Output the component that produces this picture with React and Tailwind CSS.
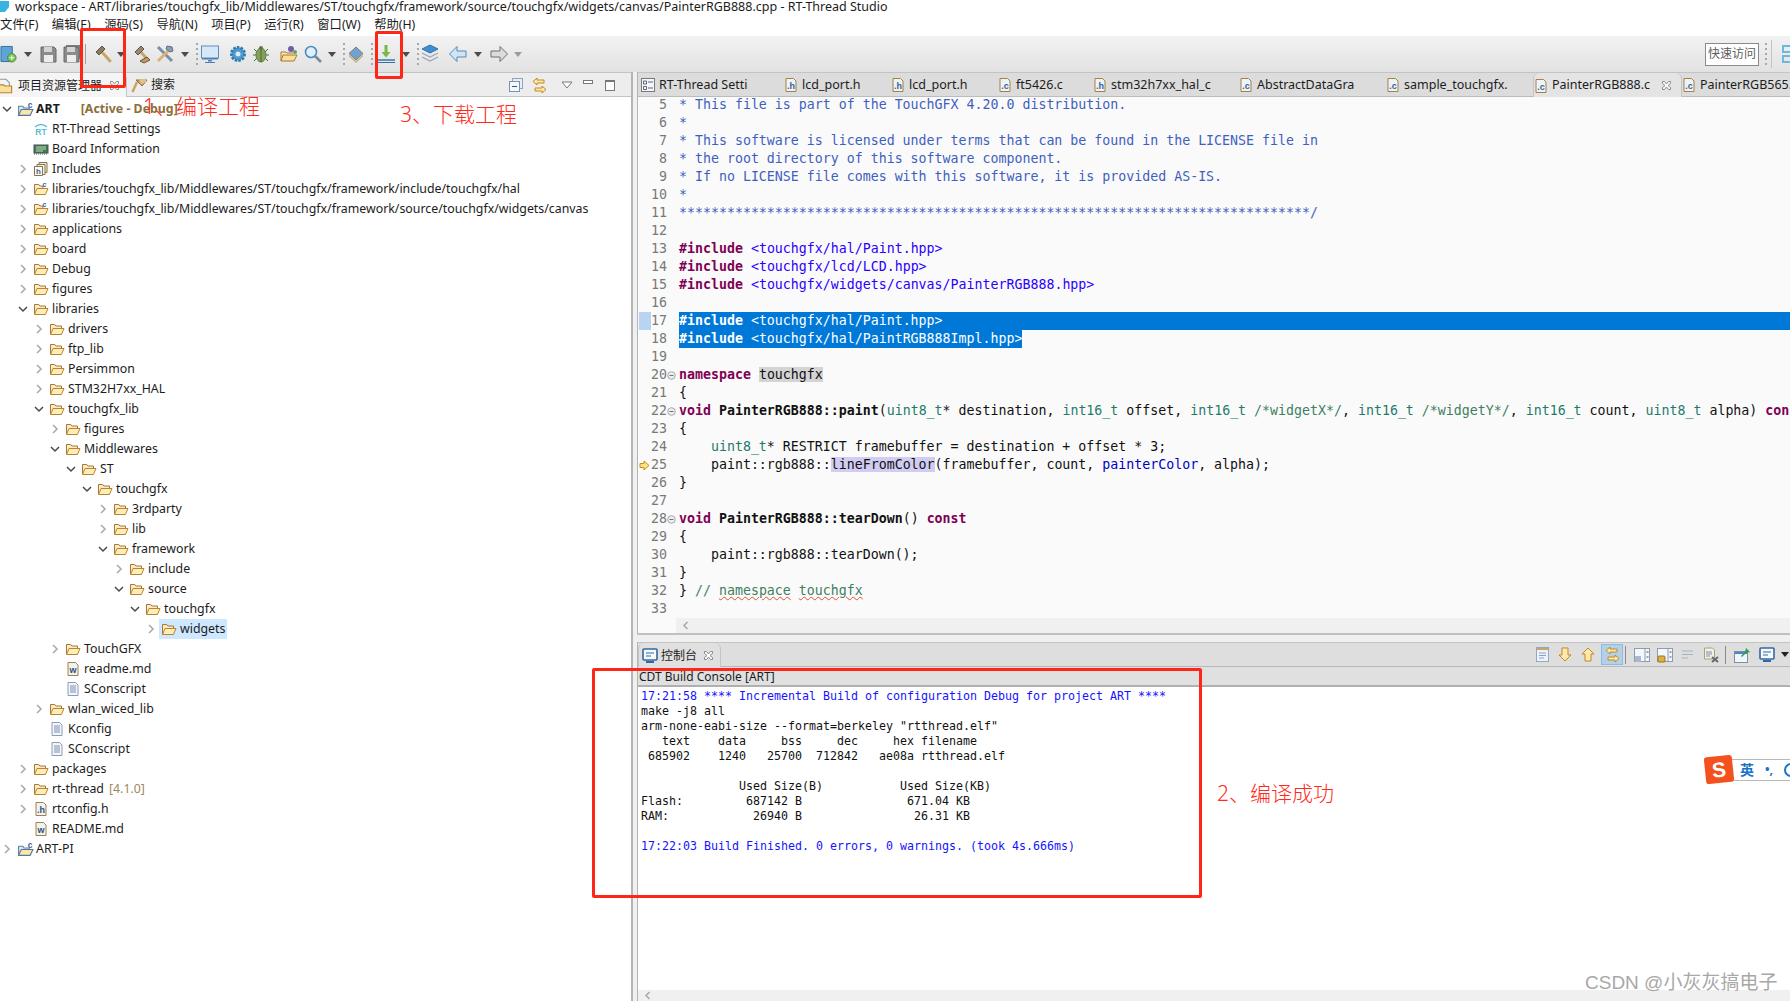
import React from 'react';

const Svg = ({ children, size = 16 }) => (
  <svg width={size} height={size} viewBox="0 0 16 16" fill="none" className="shrink-0">
    {children}
  </svg>
);

// tree + tab icons
const Folder = () => (
  <Svg>
    <path d="M1.5 13V3.5h4.2l1.2 1.5h5.6v2.4" fill="#fbeac4" stroke="#a9772b" />
    <path d="M1.5 13.5 4 7.5h11l-2.6 6z" fill="#fdeeb9" stroke="#b9832f" />
  </Svg>
);
const ProjectFolder = () => (
  <Svg size={17}>
    <path d="M1.5 13V5h4l1 1.5h5v1.5" fill="#dbe8f5" stroke="#5f7fa6" />
    <path d="M1.5 13.5 4 8h11l-2.6 5.5z" fill="#fbe6a8" stroke="#4f77a8" />
    <text x="10" y="6.5" fontSize="8" fontWeight="700" fill="#3a5f95" fontFamily="Liberation Sans">c</text>
  </Svg>
);
const SrcFolder = () => (
  <Svg>
    <path d="M1.5 13V3.5h4.2l1.2 1.5h3v2.4" fill="#fbeac4" stroke="#a9772b" />
    <path d="M1.5 13.5 4 7.5h11l-2.6 6z" fill="#fdeeb9" stroke="#b9832f" />
    <text x="9.5" y="6" fontSize="7" fontWeight="700" fill="#3a5f95" fontFamily="Liberation Sans">c</text>
  </Svg>
);
const FileLetter = ({ l, color = '#3a5f95', stroke = '#a5803f' }) => (
  <Svg>
    <path d="M3 1.5h7.5l2.5 2.5v10.5H3z" fill="#eef3f9" stroke={stroke} />
    <text x="8" y="12" textAnchor="middle" fontSize="9" fontWeight="700" fill={color} fontFamily="Liberation Sans">{l}</text>
  </Svg>
);
const TextFile = () => (
  <Svg>
    <path d="M3 1.5h7.5l2.5 2.5v10.5H3z" fill="#f2f5fa" stroke="#8c9cb5" />
    <path d="M5 5h6M5 7h6M5 9h6M5 11h6" stroke="#7e90ad" />
  </Svg>
);
const RtIcon = () => (
  <Svg>
    <path d="M2 6q6-5 12 0" stroke="#59c2d8" strokeWidth="1.4" />
    <text x="8" y="14" textAnchor="middle" fontSize="8.5" fontWeight="700" fill="#59bcd4" fontFamily="Liberation Sans">RT</text>
  </Svg>
);
const BoardIcon = () => (
  <Svg>
    <rect x="1" y="4" width="14" height="8" fill="#3c7d4c" stroke="#44505c" />
    <path d="M3 6h10M3 8h10M3 10h7" stroke="#c4d8b8" />
    <path d="M1 13h14" stroke="#555" strokeDasharray="1 1" />
  </Svg>
);
const IncludesIcon = () => (
  <Svg>
    <path d="M6 1.5h8v10H6z" fill="#e4e9f0" stroke="#8a7440" />
    <path d="M4 3.5h8v10H4z" fill="#eef2f6" stroke="#8a7440" />
    <path d="M1.5 5.5h8v9h-8z" fill="#f7f9fb" stroke="#8a7440" />
    <text x="5.5" y="13" textAnchor="middle" fontSize="8" fontWeight="700" fill="#3a5f95" fontFamily="Liberation Sans">h</text>
  </Svg>
);

const Chevron = ({ open }) => (
  <svg width="10" height="10" viewBox="0 0 10 10" fill="none" className="shrink-0">
    {open ? (
      <path d="M1 3l4 4 4-4" stroke="#4a4a4a" strokeWidth="1.5" />
    ) : (
      <path d="M3 1l4 4-4 4" stroke="#a8a8a8" strokeWidth="1.5" />
    )}
  </svg>
);

const Close = () => (
  <svg width="11" height="11" viewBox="0 0 11 11" className="shrink-0">
    <path d="M1.5 1.5h2L5.5 4l2-2.5h2v2L7 5.5l2.5 2v2h-2l-2-2.5-2 2.5h-2v-2L4 5.5l-2.5-2z" fill="#fff" stroke="#8a8a8a" strokeWidth="1" />
  </svg>
);

// toolbar icons
const Drop = ({ color = '#4c4c4c' }) => (
  <svg width="8" height="5" viewBox="0 0 8 5"><path d="M0 0h8L4 5z" fill={color} /></svg>
);
const DotSep = () => (
  <div className="flex flex-col gap-[3px]">
    <div className="w-[2px] h-[2px] bg-[#a8a8a8]" />
    <div className="w-[2px] h-[2px] bg-[#a8a8a8]" />
    <div className="w-[2px] h-[2px] bg-[#a8a8a8]" />
    <div className="w-[2px] h-[2px] bg-[#a8a8a8]" />
    <div className="w-[2px] h-[2px] bg-[#a8a8a8]" />
  </div>
);
const NewIcon = () => (
  <svg width="18" height="20" viewBox="0 0 18 20" fill="none">
    <path d="M1 2h12v16H1z" fill="#5ea4d4" stroke="#2f6f9f" />
    <circle cx="12.5" cy="14" r="4.5" fill="#7cc35a" stroke="#4b8d33" />
    <path d="M12.5 11.5v5M10 14h5" stroke="#fff" />
  </svg>
);
const SaveIcon = ({ dim }) => (
  <svg width="17" height="18" viewBox="0 0 17 18" fill="none">
    {dim && <path d="M3 1h13v13" stroke="#7c7c7c" strokeWidth="2" />}
    <path d="M1 2h13l2 2v13H1z" fill="#8b8b8b" stroke="#6b6b6b" />
    <path d="M4 2h8v5H4z" fill="#d4d4d4" />
    <path d="M4 10h9v7H4z" fill="#ededed" />
  </svg>
);
const Hammer = ({ color = '#8c7a62' }) => (
  <svg width="20" height="20" viewBox="0 0 20 20" fill="none">
    <path d="M8 7l9 10" stroke="#c8a468" strokeWidth="3" strokeLinecap="round" />
    <path d="M3 8l6-6 3 3-6 6z" fill={color} stroke="#5e5345" />
  </svg>
);
const HammerCube = () => (
  <svg width="20" height="20" viewBox="0 0 20 20" fill="none">
    <path d="M8 7l7 8" stroke="#c8a468" strokeWidth="3" />
    <path d="M3 8l6-6 3 3-6 6z" fill="#9a8972" stroke="#5e5345" />
    <path d="M8 17l7-4 3 3-6 3z" fill="#c09a5c" stroke="#6a5636" />
  </svg>
);
const Tools = () => (
  <svg width="20" height="20" viewBox="0 0 20 20" fill="none">
    <path d="M3 3l14 14" stroke="#7a8ea6" strokeWidth="3" />
    <path d="M17 3 3 17" stroke="#d8b27a" strokeWidth="3" />
    <path d="M12 2l5 1 1 4-3 1-4-3z" fill="#8f9db0" stroke="#5f6f85" />
  </svg>
);
const Monitor = () => (
  <svg width="20" height="20" viewBox="0 0 20 20" fill="none">
    <rect x="1.5" y="2" width="17" height="12" fill="#d6e8f7" stroke="#5a8fbb" />
    <path d="M2 14h16v1.5H2z" fill="#4c7fb0" />
    <path d="M8 16h4v1.5H8zM5 18h10v1H5z" fill="#4c7fb0" />
  </svg>
);
const Gear = () => (
  <svg width="20" height="20" viewBox="0 0 20 20" fill="none">
    <circle cx="10" cy="10" r="6.5" fill="#4a9ad0" stroke="#2d78ad" strokeWidth="3" strokeDasharray="2.4 1.2" />
    <circle cx="10" cy="10" r="5.5" fill="#4a9ad0" />
    <circle cx="10" cy="10" r="2.5" fill="#dcebf6" />
  </svg>
);
const Bug = () => (
  <svg width="20" height="20" viewBox="0 0 20 20" fill="none">
    <path d="M3 5l3 3M17 5l-3 3M2 11h3M18 11h-3M3 17l3-3M17 17l-3-3" stroke="#4f6f3a" />
    <ellipse cx="10" cy="11" rx="5" ry="7" fill="#83a05c" stroke="#5e7a3e" />
    <path d="M10 4v14" stroke="#50692f" />
    <circle cx="10" cy="4" r="2" fill="#5e7a3e" />
  </svg>
);
const OpenType = () => (
  <svg width="20" height="20" viewBox="0 0 20 20" fill="none">
    <path d="M2 17V8h5l1 1h6" fill="#fbeac4" stroke="#a9772b" />
    <path d="M2 17l2-6h14l-3 6z" fill="#fbdf9a" stroke="#a9772b" />
    <circle cx="12" cy="5" r="3" fill="#7a5aa6" />
    <circle cx="16" cy="8" r="2" fill="#5aa65e" />
  </svg>
);
const Search = () => (
  <svg width="20" height="20" viewBox="0 0 20 20" fill="none">
    <circle cx="8" cy="8" r="5.5" fill="#dff0fb" stroke="#4c8cbc" strokeWidth="1.6" />
    <path d="M12 12l6 6" stroke="#7c8a98" strokeWidth="2.6" />
  </svg>
);
const Book = () => (
  <svg width="20" height="20" viewBox="0 0 20 20" fill="none">
    <path d="M10 3l7 6.500-7 6.500-7-6.500z" fill="#6fa2cf" stroke="#7c7c7c" />
    <path d="M3 11.500l7 6.500 7-6.500" stroke="#c9b27c" strokeWidth="1.4" />
  </svg>
);
const Download = () => (
  <svg width="20" height="22" viewBox="0 0 20 22" fill="none">
    <path d="M8.5 2h3v7h3L10 14.5 5.5 9h3z" fill="#7ab648" />
    <path d="M1 17h18" stroke="#5f94c0" strokeWidth="2" />
    <path d="M1 19.5h18" stroke="#3e6f99" />
  </svg>
);
const Layers = () => (
  <svg width="20" height="22" viewBox="0 0 20 22" fill="none">
    <path d="M10 2l8 4-8 4-8-4z" fill="#3f8fd0" stroke="#2f74aa" />
    <path d="M2 10l8 4 8-4M2 14l8 4 8-4" stroke="#9aa7b3" strokeWidth="1.3" />
  </svg>
);
const ArrowLeft = () => (
  <svg width="20" height="18" viewBox="0 0 20 18" fill="none">
    <path d="M9 1.5 1.5 9 9 16.5V12h9V6H9z" fill="#cfe4f5" stroke="#4f8abb" />
  </svg>
);
const ArrowRight = () => (
  <svg width="20" height="18" viewBox="0 0 20 18" fill="none">
    <path d="M11 1.5 18.5 9 11 16.5V12H2V6h9z" fill="#dcdcdc" stroke="#6e6e6e" />
  </svg>
);
const Collapse = () => (
  <svg width="14" height="16" viewBox="0 0 14 16" fill="none">
    <rect x="3.5" y="1.5" width="10" height="10" stroke="#87a7c7" />
    <rect x="0.5" y="4.5" width="10" height="10" fill="#f4f8fc" stroke="#7092b5" />
    <path d="M3 9.5h5" stroke="#33587f" />
  </svg>
);
const LinkEditor = () => (
  <svg width="17" height="17" viewBox="0 0 17 17" fill="none">
    <path d="M6 1 2 4.5 6 8V6h7V3H6z" fill="#fde6a8" stroke="#c28b22" />
    <path d="M11 9l4 3.5-4 3.5v-2H4v-3h7z" fill="#fde6a8" stroke="#c28b22" />
  </svg>
);
const ViewMenu = () => (
  <svg width="12" height="8" viewBox="0 0 12 8"><path d="M1 1h10L6 7z" fill="#fff" stroke="#777" /></svg>
);
const Minimize = () => (
  <div className="w-[10px] h-[4px] bg-white border border-[#777] mb-[6px]" />
);
const Maximize = () => (
  <div className="w-[10px] h-[11px] bg-white border border-[#777] border-t-2" />
);
const Pin = () => (
  <svg width="17" height="17" viewBox="0 0 17 17" fill="none">
    <path d="M5 3h11l-5 6-3-3z" fill="#c89a58" stroke="#927241" />
    <path d="M6 5 1.5 15" stroke="#c8a468" strokeWidth="2.5" />
    <path d="M8 3l6-1.5 1.5 3-5 3z" fill="#e2c48c" />
  </svg>
);

const ConsoleNotes = () => (
  <svg width="13" height="15" viewBox="0 0 13 15" fill="none">
    <rect x="0.5" y="0.5" width="12" height="14" fill="#eef3f9" stroke="#90a8c4" />
    <path d="M1 1h11v2H1z" fill="#c8a868" />
    <path d="M3 6h7M3 8.5h7M3 11h5" stroke="#8aa0bc" />
  </svg>
);
const ArrowDown = () => (
  <svg width="14" height="15" viewBox="0 0 14 15" fill="none">
    <path d="M4 1h6v7h3l-6 6-6-6h3z" fill="#fde8b0" stroke="#c9851a" />
  </svg>
);
const ArrowUp = () => (
  <svg width="14" height="15" viewBox="0 0 14 15" fill="none">
    <path d="M4 14h6V7h3L7 1 1 7h3z" fill="#fde8b0" stroke="#c9851a" />
  </svg>
);
const Scroll = ({ children }) => (
  <svg width="16" height="16" viewBox="0 0 16 16" fill="none">
    <rect x="0.5" y="1.5" width="15" height="13" fill="#f4f7fb" stroke="#8c9db0" />
    <path d="M11 2v12" stroke="#8c9db0" />
    <path d="M12.5 5h2M12.5 10h2" stroke="#37577f" />
    {children}
  </svg>
);
const ClearConsole = () => (
  <svg width="16" height="16" viewBox="0 0 16 16" fill="none">
    <path d="M1.5 1h8l2 2v9h-10z" fill="#f2efe3" stroke="#a7a184" />
    <path d="M3 5h6M3 7h6M3 9h4" stroke="#7e90ad" />
    <path d="M9 10l6 5M15 10l-6 5" stroke="#6a6a6a" strokeWidth="2" />
  </svg>
);
const PinConsole = () => (
  <svg width="18" height="16" viewBox="0 0 18 16" fill="none">
    <rect x="0.5" y="4.5" width="13" height="11" fill="#f2f6fb" stroke="#7e90a6" />
    <path d="M1 5h12v2H1z" fill="#4d88bf" />
    <path d="M7 9l4-4 1-4 4 4-4 1-4 4z" fill="#2f9a50" />
  </svg>
);
const ConsoleIcon = () => (
  <svg width="16" height="16" viewBox="0 0 16 16" fill="none">
    <rect x="1" y="1" width="14" height="11" rx="1" fill="#f5f9fd" stroke="#33689f" strokeWidth="1.6" />
    <path d="M4 5h8M4 8h5" stroke="#33689f" />
    <path d="M4 14h8" stroke="#33689f" strokeWidth="2" />
  </svg>
);

const FolderTab = () => (
  <Svg size={18}>
    <path d="M2 2h6l3 3v4" fill="#f4f4f4" stroke="#8a9ab0" />
    <path d="M2 14V7h4l1 1h6v6z" fill="#fbdf9a" stroke="#b9832f" />
  </Svg>
);

const TOOLBAR = [
  ['ml-[0px] w-[17px]', <NewIcon />],
  ['ml-[6px] w-[10px]', <Drop />],
  ['ml-[5px] w-[20px]', <SaveIcon />],
  ['ml-[3px] w-[20px]', <SaveIcon dim />],
  ['ml-[4px] w-[1px]', <div className="w-[1px] h-[20px] bg-[#a0a0a0]" />],
  ['ml-[7px] w-[20px]', <Hammer />],
  ['ml-[3px] w-[10px]', <Drop />],
  ['ml-[6px] w-[20px]', <HammerCube />],
  ['ml-[3px] w-[20px]', <Tools />],
  ['ml-[5px] w-[10px]', <Drop />],
  ['ml-[5px] w-[3px]', <DotSep />],
  ['ml-[2px] w-[20px]', <Monitor />],
  ['ml-[8px] w-[20px]', <Gear />],
  ['ml-[3px] w-[20px]', <Bug />],
  ['ml-[8px] w-[20px]', <OpenType />],
  ['ml-[4px] w-[20px]', <Search />],
  ['ml-[4px] w-[10px]', <Drop />],
  ['ml-[5px] w-[3px]', <DotSep />],
  ['ml-[1px] w-[20px]', <Book />],
  ['ml-[4px] w-[3px]', <DotSep />],
  ['ml-[3px] w-[20px]', <Download />],
  ['ml-[5px] w-[10px]', <Drop />],
  ['ml-[5px] w-[3px]', <DotSep />],
  ['ml-[1px] w-[20px]', <Layers />],
  ['ml-[8px] w-[20px]', <ArrowLeft />],
  ['ml-[5px] w-[10px]', <Drop />],
  ['ml-[6px] w-[20px]', <ArrowRight />],
  ['ml-[4px] w-[10px]', <Drop color="#9c9c9c" />],
];

const CONSOLE_TOOLS = [
  ['ml-[0px] w-[20px]', <ConsoleNotes />],
  ['ml-[3px] w-[20px]', <ArrowDown />],
  ['ml-[3px] w-[20px]', <ArrowUp />],
  ['ml-[3px] w-[22px] h-[21px] bg-[#b3d0ea] border border-[#8fbbe0]', <LinkEditor />],
  ['ml-[2px] w-[1px]', <div className="w-[1px] h-[18px] bg-[#8a8a8a]" />],
  ['ml-[6px] w-[20px]', <Scroll><rect x="1" y="9" width="6" height="6" fill="#a8b8d0" /></Scroll>],
  ['ml-[3px] w-[20px]', <Scroll><rect x="1" y="9" width="7" height="6" rx="1" fill="#e0b040" stroke="#9a7420" /></Scroll>],
  ['ml-[3px] w-[20px]', (
    <svg width="12" height="10" viewBox="0 0 12 10"><path d="M0 1h11M0 4.5h11M0 8h6" stroke="#a4b2c8" /></svg>
  )],
  ['ml-[3px] w-[20px]', <ClearConsole />],
  ['ml-[4px] w-[1px]', <div className="w-[1px] h-[18px] bg-[#8a8a8a]" />],
  ['ml-[7px] w-[20px]', <PinConsole />],
  ['ml-[4px] w-[20px]', <ConsoleIcon />],
  ['ml-[3px] w-[10px]', <Drop color="#222" />],
];

const TREE = [
  { d: 0, t: 'ART', c: 'open', i: 'project', bold: true, suffix: '[Active - Debug]' },
  { d: 1, t: 'RT-Thread Settings', i: 'rt' },
  { d: 1, t: 'Board Information', i: 'board' },
  { d: 1, t: 'Includes', c: 'closed', i: 'includes' },
  { d: 1, t: 'libraries/touchgfx_lib/Middlewares/ST/touchgfx/framework/include/touchgfx/hal', c: 'closed', i: 'src' },
  { d: 1, t: 'libraries/touchgfx_lib/Middlewares/ST/touchgfx/framework/source/touchgfx/widgets/canvas', c: 'closed', i: 'src' },
  { d: 1, t: 'applications', c: 'closed' },
  { d: 1, t: 'board', c: 'closed' },
  { d: 1, t: 'Debug', c: 'closed' },
  { d: 1, t: 'figures', c: 'closed' },
  { d: 1, t: 'libraries', c: 'open' },
  { d: 2, t: 'drivers', c: 'closed' },
  { d: 2, t: 'ftp_lib', c: 'closed' },
  { d: 2, t: 'Persimmon', c: 'closed' },
  { d: 2, t: 'STM32H7xx_HAL', c: 'closed' },
  { d: 2, t: 'touchgfx_lib', c: 'open' },
  { d: 3, t: 'figures', c: 'closed' },
  { d: 3, t: 'Middlewares', c: 'open' },
  { d: 4, t: 'ST', c: 'open' },
  { d: 5, t: 'touchgfx', c: 'open' },
  { d: 6, t: '3rdparty', c: 'closed' },
  { d: 6, t: 'lib', c: 'closed' },
  { d: 6, t: 'framework', c: 'open' },
  { d: 7, t: 'include', c: 'closed' },
  { d: 7, t: 'source', c: 'open' },
  { d: 8, t: 'touchgfx', c: 'open' },
  { d: 9, t: 'widgets', c: 'closed', selected: true },
  { d: 3, t: 'TouchGFX', c: 'closed' },
  { d: 3, t: 'readme.md', i: 'word' },
  { d: 3, t: 'SConscript', i: 'text' },
  { d: 2, t: 'wlan_wiced_lib', c: 'closed' },
  { d: 2, t: 'Kconfig', i: 'text' },
  { d: 2, t: 'SConscript', i: 'text' },
  { d: 1, t: 'packages', c: 'closed' },
  { d: 1, t: 'rt-thread', c: 'closed', version: '[4.1.0]' },
  { d: 1, t: 'rtconfig.h', c: 'closed', i: 'h' },
  { d: 1, t: 'README.md', i: 'word' },
  { d: 0, t: 'ART-PI', c: 'closed', i: 'project' },
];

const INDENT = ['w-[0px]', 'w-[16px]', 'w-[32px]', 'w-[48px]', 'w-[64px]', 'w-[80px]', 'w-[96px]', 'w-[112px]', 'w-[128px]', 'w-[144px]'];

const treeIcon = (i) => {
  if (i === 'project') return <ProjectFolder />;
  if (i === 'src') return <SrcFolder />;
  if (i === 'rt') return <RtIcon />;
  if (i === 'board') return <BoardIcon />;
  if (i === 'includes') return <IncludesIcon />;
  if (i === 'word') return <FileLetter l="w" color="#33506f" />;
  if (i === 'text') return <TextFile />;
  if (i === 'h') return <FileLetter l=".h" color="#33506f" />;
  return <Folder />;
};

const TreeRow = ({ row }) => (
  <div className="flex items-center h-[20px] whitespace-pre text-[#1c1c1c]">
    <div className={`${INDENT[row.d]} shrink-0`} />
    <div className="w-[15px] shrink-0 pl-[2px] flex items-center">{row.c && <Chevron open={row.c === 'open'} />}</div>
    <div className={`flex items-center h-[20px] ${row.selected ? 'bg-[#cde8ff] pr-[2px]' : ''}`}>
      <div className="w-[21px] flex items-center pl-[2px]">{treeIcon(row.i)}</div>
      <span className={row.bold ? 'font-bold' : ''}>{row.t}</span>
      {row.suffix && <span className="ml-[21px] text-[#8d6f3a] font-bold">{row.suffix}</span>}
      {row.version && <span className="ml-[5px] text-[#9a8a60]">{row.version}</span>}
    </div>
  </div>
);

const EDITOR_TABS = [
  { t: 'RT-Thread Setti', w: 'w-[143px]', icon: 'settings' },
  { t: 'lcd_port.h', w: 'w-[107px]', icon: '.h' },
  { t: 'lcd_port.h', w: 'w-[107px]', icon: '.h' },
  { t: 'ft5426.c', w: 'w-[95px]', icon: '.c' },
  { t: 'stm32h7xx_hal_c', w: 'w-[146px]', icon: '.h' },
  { t: 'AbstractDataGra', w: 'w-[147px]', icon: '.c' },
  { t: 'sample_touchgfx.', w: 'w-[147px]', icon: '.c' },
  { t: 'PainterRGB888.c', w: 'w-[149px]', icon: '.c', active: true },
  { t: 'PainterRGB565.', w: 'w-[110px]', icon: '.c' },
];

const KW = 'text-[#7f0055] font-bold';
const TY = 'text-[#1f7a6a]';
const STR = 'text-[#2a00ff]';
const DOC = 'text-[#3f5fbf]';
const CM = 'text-[#3f7f5f]';
const B = 'font-bold';

const s = (text, cls) => ({ text, cls });
const inc = (path) => [s('#include', KW), s(' '), s(path, STR)];

const CODE = [
  { n: 5, p: [s('* This file is part of the TouchGFX 4.20.0 distribution.', DOC)] },
  { n: 6, p: [s('*', DOC)] },
  { n: 7, p: [s('* This software is licensed under terms that can be found in the LICENSE file in', DOC)] },
  { n: 8, p: [s('* the root directory of this software component.', DOC)] },
  { n: 9, p: [s('* If no LICENSE file comes with this software, it is provided AS-IS.', DOC)] },
  { n: 10, p: [s('*', DOC)] },
  { n: 11, p: [s('*'.repeat(79) + '/', DOC)] },
  { n: 12, p: [] },
  { n: 13, p: inc('<touchgfx/hal/Paint.hpp>') },
  { n: 14, p: inc('<touchgfx/lcd/LCD.hpp>') },
  { n: 15, p: inc('<touchgfx/widgets/canvas/PainterRGB888.hpp>') },
  { n: 16, p: [] },
  { n: 17, sel: 'full', mark: 'hatch', p: [s('#include', B), s(' <touchgfx/hal/Paint.hpp>')] },
  { n: 18, sel: 'part', p: [s('#include', B), s(' <touchgfx/hal/PaintRGB888Impl.hpp>')] },
  { n: 19, p: [] },
  { n: 20, fold: true, p: [s('namespace', KW), s(' '), s('touchgfx', 'bg-[#d4d4d4]')] },
  { n: 21, p: [s('{')] },
  {
    n: 22,
    fold: true,
    p: [
      s('void', KW), s(' '), s('PainterRGB888::paint', B), s('('), s('uint8_t', TY), s('* destination, '),
      s('int16_t', TY), s(' offset, '), s('int16_t', TY), s(' '), s('/*widgetX*/', CM), s(', '),
      s('int16_t', TY), s(' '), s('/*widgetY*/', CM), s(', '), s('int16_t', TY), s(' count, '),
      s('uint8_t', TY), s(' alpha) '), s('const', KW),
    ],
  },
  { n: 23, p: [s('{')] },
  { n: 24, p: [s('    '), s('uint8_t', TY), s('* RESTRICT framebuffer = destination + offset * 3;')] },
  {
    n: 25,
    mark: 'arrow',
    p: [
      s('    paint::rgb888::'), s('lineFromColor', 'bg-[#d0ccf2]'), s('(framebuffer, count, '),
      s('painterColor', 'text-[#0000c0]'), s(', alpha);'),
    ],
  },
  { n: 26, p: [s('}')] },
  { n: 27, p: [] },
  { n: 28, fold: true, p: [s('void', KW), s(' '), s('PainterRGB888::tearDown', B), s('() '), s('const', KW)] },
  { n: 29, p: [s('{')] },
  { n: 30, p: [s('    paint::rgb888::tearDown();')] },
  { n: 31, p: [s('}')] },
  {
    n: 32,
    p: [
      s('} '), s('// ', CM),
      s('namespace', `${CM} underline decoration-wavy decoration-[#e05030] decoration-1`), s(' ', CM),
      s('touchgfx', `${CM} underline decoration-wavy decoration-[#e05030] decoration-1`),
    ],
  },
  { n: 33, p: [] },
];

const CodeLine = ({ line }) => (
  <div className="flex h-[18px] leading-[18px]">
    <div className="w-[13px] shrink-0 flex items-center justify-center">
      {line.mark === 'hatch' && <div className="w-[12px] h-[18px] bg-[#4c8cd0] bg-[radial-gradient(#b8d4f0_1px,transparent_1px)] bg-[length:2px_2px]" />}
      {line.mark === 'arrow' && (
        <svg width="11" height="11" viewBox="0 0 11 11"><path d="M5 1l5 4.5L5 10V7.5H1v-4h4z" fill="#fde08a" stroke="#c49018" /></svg>
      )}
    </div>
    <div className="w-[16px] shrink-0 text-right text-[#787878]">{line.n}</div>
    <div className="w-[9px] shrink-0 flex items-center justify-center">
      {line.fold && (
        <svg width="9" height="9" viewBox="0 0 9 9"><circle cx="4.5" cy="4.5" r="3.8" fill="#eee" stroke="#a0a8b0" /><path d="M2.5 4.5h4" stroke="#6a7280" /></svg>
      )}
    </div>
    <div className={`ml-[3px] ${line.sel === 'full' ? 'flex-1' : ''} whitespace-pre ${line.sel ? 'bg-[#0078d7] text-white' : 'text-[#111]'}`}>
      {line.p.map((part, i) => (
        <span key={i} className={part.cls}>{part.text}</span>
      ))}
    </div>
  </div>
);

const BUILD_LOG = [
  { t: '17:21:58 **** Incremental Build of configuration Debug for project ART ****', blue: true },
  { t: 'make -j8 all' },
  { t: 'arm-none-eabi-size --format=berkeley "rtthread.elf"' },
  { t: '   text    data     bss     dec     hex filename' },
  { t: ' 685902    1240   25700  712842   ae08a rtthread.elf' },
  { t: ' ' },
  { t: '              Used Size(B)           Used Size(KB)' },
  { t: 'Flash:         687142 B               671.04 KB' },
  { t: 'RAM:            26940 B                26.31 KB' },
  { t: ' ' },
  { t: '17:22:03 Build Finished. 0 errors, 0 warnings. (took 4s.666ms)', blue: true },
];

const FileTabIcon = ({ kind }) => {
  if (kind === 'settings') {
    return (
      <Svg>
        <rect x="1.5" y="1.5" width="13" height="13" fill="#f4f6f9" stroke="#7a7a7a" />
        <path d="M3.5 4h3v3h-3zM3.5 9.5h3v3h-3zM8 5h5M8 11h5" stroke="#5a6a7a" />
      </Svg>
    );
  }
  return <FileLetter l={kind} />;
};

export default function App() {
  return (
    <div className="relative w-[1790px] h-[1001px] overflow-hidden bg-white flex flex-col font-['Noto_Sans','Noto_Sans_CJK_SC',sans-serif] text-[12px] text-[#1c1c1c]">
      {/* Title */}
      <div className="h-[14px] flex items-center overflow-hidden shrink-0 text-[12.5px]">
        <div className="w-[15px] flex items-center">
          <svg width="9" height="14" viewBox="0 0 9 14"><path d="M0 1h9v6l-4 5H0z" fill="#39b4e0" /></svg>
        </div>
        <span className="whitespace-pre">workspace - ART/libraries/touchgfx_lib/Middlewares/ST/touchgfx/framework/source/touchgfx/widgets/canvas/PainterRGB888.cpp - RT-Thread Studio</span>
      </div>

      {/* Menu */}
      <div className="h-[22px] flex items-center gap-[13.5px] shrink-0 text-[12.3px]">
        {['文件(F)', '编辑(E)', '源码(S)', '导航(N)', '项目(P)', '运行(R)', '窗口(W)', '帮助(H)'].map((m) => (
          <span key={m}>{m}</span>
        ))}
      </div>

      {/* Toolbar */}
      <div className="h-[36px] flex items-center bg-linear-to-b from-[#f2f2f2] to-[#e2e2e2] shrink-0">
        {TOOLBAR.map(([cls, icon], i) => (
          <div key={i} className={`${cls} shrink-0 flex items-center justify-center`}>{icon}</div>
        ))}
        <div className="ml-auto w-[54px] h-[23px] flex items-center justify-center bg-white border border-[#8a8a8a] text-[#5c5c5c]">快速访问</div>
        <div className="ml-[6px]"><DotSep /></div>
        <div className="ml-[4px] w-[1px] h-[28px] bg-[#c4c4c4]" />
        <div className="ml-[10px] w-[8px] h-[18px] grid gap-[2px] overflow-hidden">
          <div className="w-[10px] h-[8px] border-2 border-[#6cb8e0]" />
          <div className="w-[10px] h-[8px] border-2 border-[#6cb8e0]" />
        </div>
      </div>

      <div className="flex-1 flex min-h-0 bg-[#f0f0f0]">
        {/* Left: project explorer */}
        <div className="w-[633px] shrink-0 flex flex-col bg-white border-r-2 border-[#b4b4b4]">
          <div className="h-[25px] shrink-0 flex items-stretch bg-[#ededed] border-t border-[#c4c4c4]">
            <div className="w-[127px] flex items-center bg-[#f5f5f5] border-r border-b-0 border-[#c4c4c4] rounded-tr-[6px] relative pt-[1px]">
              <div className="flex items-center -ml-[3px]">
                <FolderTab />
              </div>
              <span className="ml-[3px] whitespace-pre">项目资源管理器</span>
              <div className="ml-[7px]"><Close /></div>
            </div>
            <div className="flex-1 flex items-center border-b border-[#c4c4c4] pt-[1px]">
              <div className="ml-[4px]"><Pin /></div>
              <span className="ml-[3px]">搜索</span>
              <div className="ml-auto mr-[11px] flex items-center">
                <div className="w-[20px] flex justify-center"><Collapse /></div>
                <div className="ml-[3px] w-[20px] flex justify-center"><LinkEditor /></div>
                <div className="ml-[8px] w-[20px] flex justify-center"><ViewMenu /></div>
                <div className="ml-[1px] w-[20px] flex justify-center"><Minimize /></div>
                <div className="ml-[2px] w-[20px] flex justify-center"><Maximize /></div>
              </div>
            </div>
          </div>
          <div className="pt-[2px] flex-1 overflow-hidden text-[12.35px]">
            {TREE.map((row, i) => (
              <TreeRow key={i} row={row} />
            ))}
          </div>
        </div>

        {/* Right: editor + console */}
        <div className="ml-[4px] flex-1 min-w-0 flex flex-col border-l border-[#b4b4b4] bg-white">
          <div className="h-[25px] shrink-0 flex items-stretch bg-[#dcdcdc] border-t border-[#c4c4c4] overflow-hidden">
            <div className="w-[3px] shrink-0 border-b border-[#bcbcbc]" />
            {EDITOR_TABS.map((tab, i) => (
              <div
                key={i}
                className={`${tab.w} shrink-0 flex items-center pt-[1px] whitespace-pre ${tab.active ? 'bg-[#e4e4e4] border-x border-[#c4c4c4] rounded-t-[6px]' : 'border-b border-[#bcbcbc]'}`}
              >
                <div className="-ml-[1px]"><FileTabIcon kind={tab.icon} /></div>
                <span className="ml-[3px] text-[12.5px]">{tab.t}</span>
                {tab.active && <div className="ml-auto mr-[9px]"><Close /></div>}
              </div>
            ))}
          </div>

          {/* Editor */}
          <div className="h-[536px] shrink-0 flex flex-col bg-[#fafafa] font-['DejaVu_Sans_Mono',monospace] text-[13.28px]">
            <div className="flex-1 min-h-0 overflow-hidden">
              <div className="-mt-[1px]">
                {CODE.map((line) => (
                  <CodeLine key={line.n} line={line} />
                ))}
              </div>
            </div>
            <div className="h-[15px] shrink-0 ml-[38px] bg-[#f0f0f0] flex items-center pl-[6px]">
              <svg width="7" height="9" viewBox="0 0 7 9"><path d="M5.5 1 2 4.5 5.5 8" stroke="#a8a8a8" strokeWidth="1.5" fill="none" /></svg>
            </div>
          </div>

          {/* Sash */}
          <div className="h-[9px] shrink-0 bg-[#f0f0f0] border-t-2 border-[#c0c0c0] -ml-[1px]" />

          {/* Console tabs */}
          <div className="h-[25px] shrink-0 flex items-stretch bg-[#dedede] border-t border-[#c4c4c4]">
            <div className="w-[83px] flex items-center bg-[#e0e0e0] border-x border-[#c4c4c4] rounded-t-[6px] pt-[1px]">
              <div className="ml-[3px]"><ConsoleIcon /></div>
              <span className="ml-[3px]">控制台</span>
              <div className="ml-[6px]"><Close /></div>
            </div>
            <div className="flex-1 flex items-center justify-end border-b border-[#b8b8b8]">
              {CONSOLE_TOOLS.map(([cls, icon], i) => (
                <div key={i} className={`${cls} shrink-0 flex items-center justify-center`}>{icon}</div>
              ))}
            </div>
          </div>
          <div className="h-[20px] shrink-0 flex items-center bg-[#e0e0e0] border-b-2 border-[#b0b0b0] whitespace-pre pl-[1px] pt-[1px]">CDT Build Console [ART]</div>

          {/* Console output */}
          <div className="flex-1 min-h-0 pl-[3px] pt-[2px] font-['DejaVu_Sans_Mono',monospace] text-[11.63px] leading-[15px] whitespace-pre">
            {BUILD_LOG.map((l, i) => (
              <div key={i} className={`h-[15px] ${l.blue ? 'text-[#1414ff]' : 'text-[#111]'}`}>{l.t}</div>
            ))}
          </div>
          <div className="h-[11px] shrink-0 bg-[#f0f0f0] flex items-center pl-[6px]">
            <svg width="7" height="9" viewBox="0 0 7 9"><path d="M5.5 1 2 4.5 5.5 8" stroke="#a8a8a8" strokeWidth="1.5" fill="none" /></svg>
          </div>
        </div>
      </div>

      {/* Annotations drawn over the screenshot */}
      <div className="absolute left-[80px] top-[28px] w-[46px] h-[60px] border-[3px] border-[#ff2618] rounded-[2px]" />
      <div className="absolute left-[375px] top-[31px] w-[28px] h-[48px] border-[3px] border-[#ff2618] rounded-[2px]" />
      <div className="absolute left-[592px] top-[668px] w-[610px] h-[230px] border-[3px] border-[#ff2618] rounded-[2px]" />
      <div className="absolute left-[143px] top-[91px] whitespace-pre text-[21px] leading-[30px] font-light text-[#ff2a1c]">1、编译工程</div>
      <div className="absolute left-[400px] top-[99px] whitespace-pre text-[21px] leading-[30px] font-light text-[#ff2a1c]">3、下载工程</div>
      <div className="absolute left-[1217px] top-[778px] whitespace-pre text-[21px] leading-[30px] font-light text-[#ff2a1c]">2、编译成功</div>

      {/* Sogou IME bar */}
      <div className="absolute left-[1705px] top-[756px] flex items-center">
        <div className="w-[28px] h-[27px] -rotate-6 rounded-[3px] bg-[#f4511e] flex items-center justify-center text-white font-bold text-[21px] leading-none z-10 font-['Liberation_Sans',sans-serif]">S</div>
        <div className="w-[60px] h-[22px] -ml-[2px] bg-white border-y border-[#b8b8b8] flex items-center pl-[9px] gap-[11px] text-[#1a73c8] font-bold text-[14px]">
          <span>英</span>
          <span className="text-[12px]">•,</span>
          <div className="w-[14px] h-[14px] shrink-0 rounded-full border-2 border-[#1a73c8]" />
        </div>
      </div>

      {/* Watermark */}
      <div className="absolute left-[1585px] top-[969px] whitespace-pre text-[19px] leading-[28px] text-[#a8a8a8] font-['Liberation_Sans','Noto_Sans_CJK_SC',sans-serif]">CSDN @小灰灰搞电子</div>
    </div>
  );
}
